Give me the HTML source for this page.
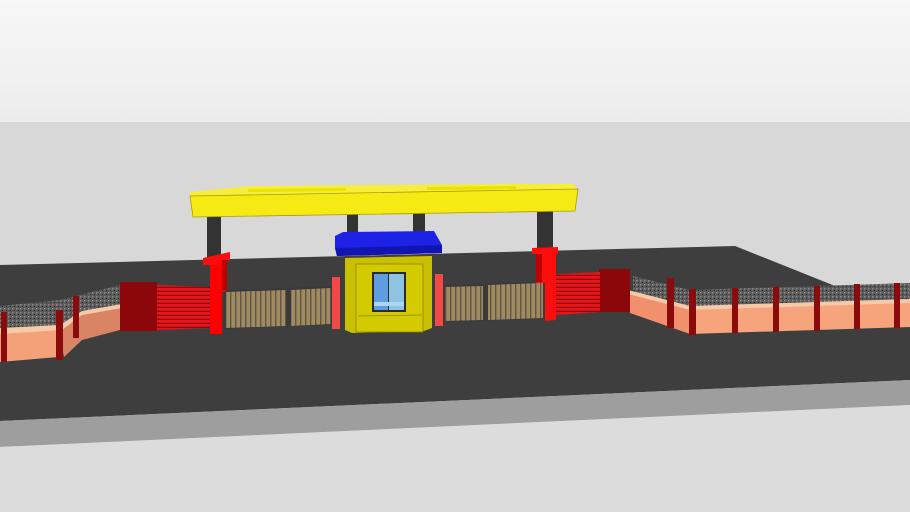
<!DOCTYPE html>
<html><head><meta charset="utf-8"><style>html,body{margin:0;padding:0;width:910px;height:512px;overflow:hidden;background:#d9d9d9}</style></head>
<body>
<svg width="910" height="512" viewBox="0 0 910 512" xmlns="http://www.w3.org/2000/svg">
<defs>
<linearGradient id="sky" x1="0" y1="0" x2="0" y2="1"><stop offset="0" stop-color="#f7f7f7"/><stop offset="1" stop-color="#ececec"/></linearGradient>
<pattern id="wood" width="5" height="10" patternUnits="userSpaceOnUse"><rect width="5" height="10" fill="#a08a62"/><rect width="1.4" height="10" fill="#5e5646"/></pattern>
<pattern id="louv" width="10" height="4" patternUnits="userSpaceOnUse"><rect width="10" height="4" fill="#e8141a"/><rect width="10" height="1.3" y="2.7" fill="#8a0b0e"/></pattern>
<pattern id="mesh" width="4" height="4" patternUnits="userSpaceOnUse"><rect width="4" height="4" fill="#5a5a5a"/><rect width="1.5" height="1.5" fill="#8d8d8d"/><rect x="2" y="2" width="1" height="1" fill="#2a2a2a"/></pattern>
</defs>
<rect width="910" height="122" fill="url(#sky)"/>
<rect y="122" width="910" height="390" fill="#d8d8d8"/>
<!-- slab -->
<polygon points="0,265 735,246 910,316 910,380 0,421" fill="#3e3e3e"/>
<polygon points="0,421 910,380 910,405 0,447" fill="#9e9e9e"/>
<polygon points="0,447 910,405 910,512 0,512" fill="#dcdcdc"/>
<!-- left fence -->
<polygon points="0,306 60,300 120,285 120,309 64,330 0,335" fill="url(#mesh)"/>
<polygon points="0,330 58,327 58,357 0,362" fill="#f4a079"/>
<polygon points="58,327 82,313 120,306 120,330 82,340 64,357" fill="#d98565"/>
<polygon points="0,328 60,325 82,311 122,304 122,308 82,315 62,330 0,334" fill="#f6c9a8"/>
<g fill="#8b0a0c"><rect x="1" y="312" width="6" height="50"/><rect x="56" y="310" width="7" height="50"/><rect x="73" y="296" width="6" height="42"/></g>
<!-- right fence -->
<polygon points="633,276 690,290 910,283 910,306 690,311 633,292" fill="url(#mesh)"/>
<polygon points="630,292 690,308 690,334 630,313" fill="#f0906c"/>
<polygon points="690,308 910,302 910,327 690,334" fill="#f6a47c"/>
<polygon points="628,290 690,306 910,299 910,303 690,310 628,294" fill="#f6c9a8"/>
<g fill="#8b0a0c"><rect x="667" y="278" width="7" height="50"/><rect x="689" y="289" width="7" height="46"/><rect x="732" y="288" width="6" height="45"/><rect x="773" y="287" width="6" height="45"/><rect x="814" y="286" width="6" height="45"/><rect x="854" y="284" width="6" height="45"/><rect x="894" y="283" width="6" height="45"/></g>
<!-- dark red blocks & louvers -->
<rect x="120" y="282" width="37" height="49" fill="#8c0709"/>
<polygon points="157,285 210,287 210,328 157,330" fill="url(#louv)"/>
<rect x="599" y="269" width="31" height="43" fill="#8c0709"/>
<polygon points="556,274 600,272 600,312 556,315" fill="url(#louv)"/>
<!-- gates -->
<polygon points="224,290 333,286 333,325 224,329" fill="#3a3a3a"/>
<polygon points="226,292 286,290 286,326 226,328" fill="url(#wood)"/>
<polygon points="291,290 331,288 331,324 291,326" fill="url(#wood)"/>
<polygon points="443,285 545,281 545,319 443,322" fill="#3a3a3a"/>
<polygon points="445,287 483,286 483,320 445,321" fill="url(#wood)"/>
<polygon points="488,285 543,283 543,318 488,320" fill="url(#wood)"/>
<rect x="332" y="277" width="8" height="52" fill="#f24848"/>
<rect x="435" y="274" width="8" height="52" fill="#f24848"/>
<!-- columns -->
<rect x="207" y="215" width="14" height="45" fill="#333"/>
<rect x="347" y="214" width="11" height="35" fill="#333"/>
<rect x="413" y="213" width="12" height="35" fill="#333"/>
<rect x="537" y="210" width="16" height="40" fill="#333"/>
<!-- red pillars -->
<polygon points="203,258 230,252 230,260 227,260 227,290 222,292 222,334 210,334 210,265 203,265" fill="#ff0d0d"/>
<rect x="210" y="265" width="12" height="69" fill="#f00"/>
<rect x="222" y="260" width="5" height="30" fill="#b00"/>
<polygon points="532,248 558,247 558,254 556,254 556,320 545,321 545,283 536,283 536,254 532,254" fill="#ff0d0d"/>
<rect x="536" y="254" width="6" height="28" fill="#b00"/>
<!-- booth -->
<polygon points="335,236 343,232 434,231 442,245 442,253 337,256 335,248" fill="#1e22e6"/>
<polygon points="335,248 442,245 442,253 337,256" fill="#1216b0"/>
<polygon points="345,258 432,256 432,328 424,331 352,333 345,330" fill="#c9c000"/>
<rect x="356" y="264" width="67" height="68" fill="#d3cb00" stroke="#8a8300" stroke-width="0.8"/>
<rect x="372" y="272" width="34" height="40" fill="#2a2a2a"/>
<rect x="374" y="274" width="14" height="36" fill="#5f9ce0"/>
<rect x="389" y="274" width="15" height="36" fill="#8fc3e0"/>
<rect x="374" y="302" width="30" height="4" fill="#a9d6f0"/>
<line x1="358" y1="316" x2="422" y2="315" stroke="#8a8300" stroke-width="0.8"/>
<!-- canopy -->
<polygon points="190,192 250,186 520,184 573,184 578,190 190,196" fill="#f7ee3c"/>
<polygon points="248,189 346,188 346,191 248,192" fill="#eae200"/>
<polygon points="427,187 516,186 516,189 427,190" fill="#eae200"/>
<polygon points="190,196 578,189 575,211 193,217" fill="#f5ea14" stroke="#a89e00" stroke-width="0.8"/>
</svg>
</body></html>
